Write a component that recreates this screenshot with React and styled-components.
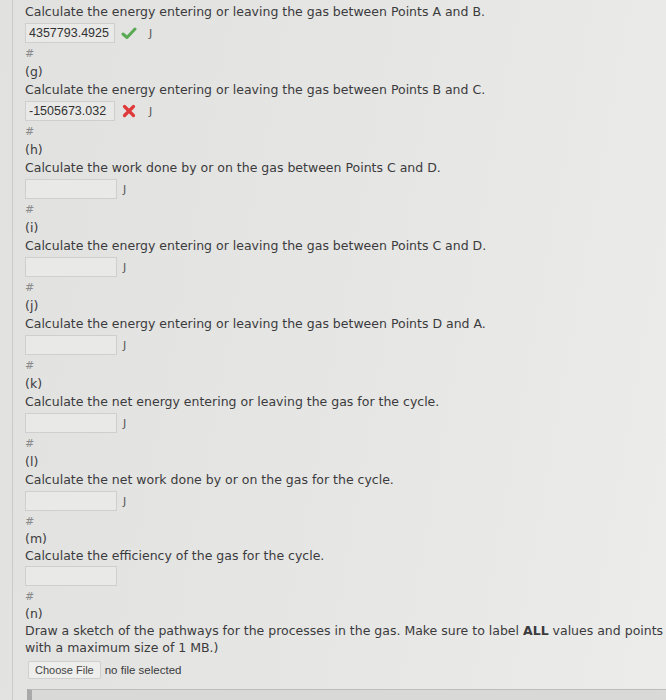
import styled, { createGlobalStyle } from "styled-components";

const GlobalStyle = createGlobalStyle`
  html, body {
    margin: 0;
    padding: 0;
    overflow: hidden;
  }
  body {
    background: linear-gradient(100deg, #e1e1df 0%, #e6e6e4 55%, #ececea 100%);
    font-family: "DejaVu Sans", Verdana, sans-serif;
    color: #3b3b3d;
  }
`;

const Page = styled.div`
  padding-left: 12px;
  height: 700px;
`;

const Content = styled.div`
  border-left: 1px solid #cacaca;
  padding: 3px 0 0 12px;
  height: 100%;
  box-sizing: border-box;
`;

const Line = styled.div`
  font-size: 12.5px;
  line-height: ${(p) => (p.$compact ? 17 : 18)}px;
  white-space: nowrap;
`;

const Hash = styled(Line)`
  color: #8a8a8c;
  font-size: 11px;
`;

const AnswerRow = styled.div`
  display: flex;
  align-items: center;
  height: 24px;
`;

const Box = styled.input`
  box-sizing: border-box;
  width: ${(p) => p.$width || 92}px;
  height: ${(p) => p.$height || 20}px;
  margin: 0;
  padding: 0 3px;
  border: 1px solid #cfcfcf;
  background: #e9e9e7;
  font-family: "Liberation Sans", Arial, sans-serif;
  font-size: 12.5px;
  color: #333;
  outline: none;
`;

const Unit = styled.span`
  font-size: 11px;
  color: #555;
  margin-left: ${(p) => p.$gap || 6}px;
`;

const Mark = styled.svg`
  margin-left: 6px;
  width: 16px;
  height: 14px;
`;

const Strong = styled.b`
  font-weight: bold;
`;

const FileRow = styled.div`
  display: flex;
  align-items: center;
  margin-top: 4px;
  gap: 4px;
  font-family: "Liberation Sans", Arial, sans-serif;
  font-size: 11.5px;
`;

const FileButton = styled.button`
  font-family: "Liberation Sans", Arial, sans-serif;
  font-size: 11px;
  color: #444;
  padding: 1px 6px;
  height: 18px;
  background: #eeeeec;
  border: 1px solid #cfcfcf;
  border-radius: 2px;
  margin-left: 3px;
`;

const Editor = styled.div`
  margin-top: 10px;
  margin-left: 2px;
  height: 60px;
  background: #d9d9d7;
  border-top: 1px solid #bdbdbd;
  border-left: 5px solid #a9a9a9;
`;

const Check = () => (
  <Mark viewBox="0 0 16 14">
    <path
      d="M2 8 L6 11.5 L14 3"
      fill="none"
      stroke="#5aaa55"
      strokeWidth="3"
      strokeLinecap="round"
      strokeLinejoin="round"
    />
  </Mark>
);

const Cross = () => (
  <Mark viewBox="0 0 16 14">
    <path
      d="M3.5 2.5 L12.5 11.5 M12.5 2.5 L3.5 11.5"
      fill="none"
      stroke="#e0393a"
      strokeWidth="3.2"
      strokeLinecap="round"
    />
  </Mark>
);

const Answer = ({ value, mark, unit = true }) => (
  <AnswerRow>
    <Box readOnly value={value || ""} $width={value ? 90 : 92} />
    {mark === "ok" && <Check />}
    {mark === "bad" && <Cross />}
    {unit && <Unit $gap={mark ? 12 : 6}>J</Unit>}
  </AnswerRow>
);

const Part = ({ label, prompt, compact, children }) => (
  <>
    <Hash $compact={compact}>#</Hash>
    <Line $compact={compact}>({label})</Line>
    <Line $compact={compact}>{prompt}</Line>
    {children}
  </>
);

const parts = [
  { label: "h", prompt: "Calculate the work done by or on the gas between Points C and D." },
  { label: "i", prompt: "Calculate the energy entering or leaving the gas between Points C and D." },
  { label: "j", prompt: "Calculate the energy entering or leaving the gas between Points D and A." },
  { label: "k", prompt: "Calculate the net energy entering or leaving the gas for the cycle." },
  { label: "l", prompt: "Calculate the net work done by or on the gas for the cycle." },
];

export default function App() {
  return (
    <>
      <GlobalStyle />
      <Page>
        <Content>
          <Line>Calculate the energy entering or leaving the gas between Points A and B.</Line>
          <Answer value="4357793.4925" mark="ok" />
          <Part label="g" prompt="Calculate the energy entering or leaving the gas between Points B and C.">
            <Answer value="-1505673.032" mark="bad" />
          </Part>
          {parts.map((p) => (
            <Part key={p.label} label={p.label} prompt={p.prompt}>
              <Answer />
            </Part>
          ))}
          <Part compact label="m" prompt="Calculate the efficiency of the gas for the cycle.">
            <Answer unit={false} />
          </Part>
          <Hash $compact>#</Hash>
          <Line $compact>(n)</Line>
          <Line $compact>
            Draw a sketch of the pathways for the processes in the gas. Make sure to label{" "}
            <Strong>ALL</Strong> values and points
          </Line>
          <Line>with a maximum size of 1 MB.)</Line>
          <FileRow>
            <FileButton>Choose File</FileButton>
            <span>no file selected</span>
          </FileRow>
          <Editor />
        </Content>
      </Page>
    </>
  );
}
